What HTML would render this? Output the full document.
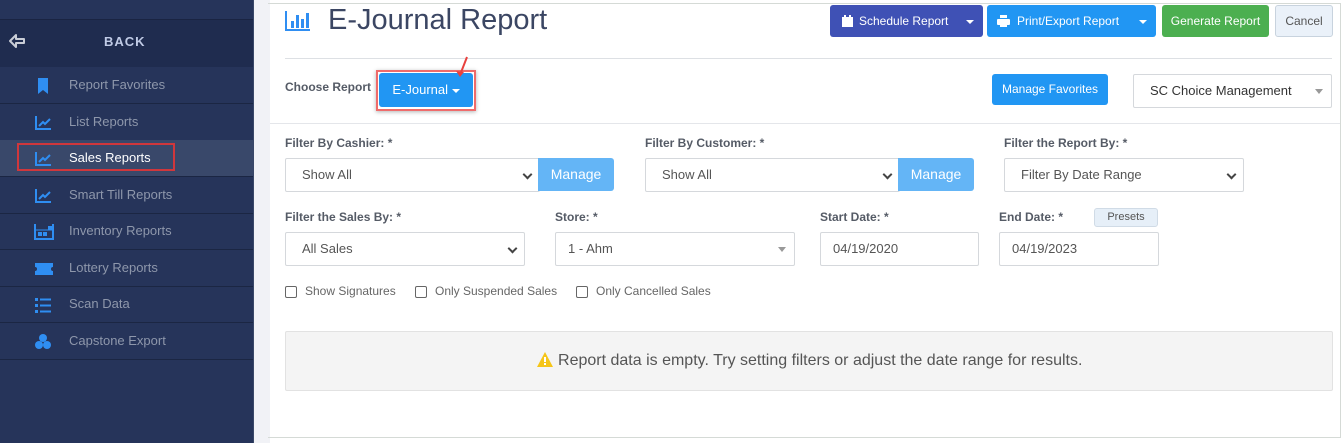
<!DOCTYPE html>
<html><head><meta charset="utf-8"><style>
*{box-sizing:border-box;margin:0;padding:0}
body{width:1344px;height:443px;overflow:hidden;background:#fff;font-family:"Liberation Sans",sans-serif;position:relative}
.abs{position:absolute}
#side{left:0;top:0;width:254px;height:443px;background:#26345a;border-right:1px solid #3a4868}
.row{position:absolute;left:0;width:253px;height:37px;border-bottom:1px solid #1b2643;color:#8e97ab;font-size:13px;line-height:36px;padding-left:69px}
.row svg{position:absolute;left:34px;top:10px}
.lbl{position:absolute;font-size:12px;font-weight:bold;color:#555b66}
.sel{position:absolute;height:34px;border:1px solid #d5d8dc;border-radius:2px;background:#fff;font-size:13px;color:#555;line-height:32px;padding-left:16px}
.chev{position:absolute;right:8px;top:12px;width:7px;height:7px;border-right:2px solid #444;border-bottom:2px solid #444;transform:rotate(45deg)}
.tri{position:absolute;right:8px;top:14px;border-left:4px solid transparent;border-right:4px solid transparent;border-top:5px solid #999}
.btn{position:absolute;height:32px;color:#fff;font-size:12px;line-height:32px;border-radius:3px;text-align:center}
.cb{position:absolute;top:286px;width:12px;height:12px;border:1px solid #666;border-radius:2px}
.ct{position:absolute;top:284px;font-size:12px;color:#666}
</style></head><body>
<div class="abs" style="left:254px;top:0;width:16px;height:443px;background:#f1f2f6"></div>
<div class="abs" style="left:268px;top:3px;width:1073px;height:435px;border:1px solid #d5dad6;border-left:none"></div>
<div id="side" class="abs">
<div class="abs" style="left:0;top:19px;width:253px;height:48px;background:#1f2c4f;border-top:1px solid #1a2442"></div>
<svg class="abs" style="left:8px;top:33px" width="18" height="16" viewBox="0 0 18 16"><path d="M8 2 L2 8 L8 14 V10 H16 V6 H8 Z" fill="none" stroke="#c9cdd6" stroke-width="2" stroke-linejoin="round"/></svg>
<div class="abs" style="left:104px;top:34px;font-size:13px;font-weight:bold;color:#c0cbe6;letter-spacing:1px">BACK</div>
<div class="row" style="top:67px"><svg width="18" height="18"><path d="M4 1H14V17L9 13L4 17Z" fill="#2f8ef2"/></svg>Report Favorites</div>
<div class="row" style="top:104px"><svg width="18" height="18"><path d="M2 2V15H17" stroke="#2f8ef2" stroke-width="2" fill="none"/><path d="M5 12L9 8L11 10L16 5" stroke="#2f8ef2" stroke-width="2" fill="none"/></svg>List Reports</div>
<div class="row" style="top:140px;background:#39486a;color:#fff"><svg width="18" height="18"><path d="M2 2V15H17" stroke="#2f8ef2" stroke-width="2" fill="none"/><path d="M5 12L9 8L11 10L16 5" stroke="#2f8ef2" stroke-width="2" fill="none"/></svg>Sales Reports</div>
<div class="abs" style="left:17px;top:143px;width:158px;height:28px;border:2px solid #d0373c"></div>
<div class="row" style="top:177px"><svg width="18" height="18"><path d="M2 2V15H17" stroke="#2f8ef2" stroke-width="2" fill="none"/><path d="M5 12L9 8L11 10L16 5" stroke="#2f8ef2" stroke-width="2" fill="none"/></svg>Smart Till Reports</div>
<div class="row" style="top:213px"><svg width="20" height="18"><path d="M1 1V17M19 1V17M1 16H19" stroke="#2f8ef2" stroke-width="2"/><rect x="4" y="9" width="4" height="4" fill="#2f8ef2"/><rect x="9" y="9" width="4" height="4" fill="#2f8ef2"/><rect x="14" y="3" width="4" height="4" fill="#2f8ef2"/><path d="M1 7H19" stroke="#2f8ef2" stroke-width="1"/></svg>Inventory Reports</div>
<div class="row" style="top:250px"><svg width="20" height="18"><path d="M1 3H19V7A2 2 0 0 0 19 11V15H1V11A2 2 0 0 0 1 7Z" fill="#2f8ef2"/></svg>Lottery Reports</div>
<div class="row" style="top:286px"><svg width="18" height="18"><g fill="#2f8ef2"><rect x="1" y="2" width="3" height="3"/><rect x="1" y="8" width="3" height="3"/><rect x="1" y="14" width="3" height="3"/><rect x="6" y="2.5" width="11" height="2"/><rect x="6" y="8.5" width="11" height="2"/><rect x="6" y="14.5" width="11" height="2"/></g></svg>Scan Data</div>
<div class="row" style="top:323px"><svg width="18" height="18"><g fill="#2f8ef2"><circle cx="9" cy="5" r="4"/><circle cx="5" cy="12" r="4"/><circle cx="13" cy="12" r="4"/></g></svg>Capstone Export</div>
</div>
<!-- header -->
<svg class="abs" style="left:285px;top:10px" width="26" height="22"><path d="M1 1V20H25" stroke="#2f8ef2" stroke-width="2" fill="none"/><g fill="#2f8ef2"><rect x="6" y="11" width="3" height="7"/><rect x="11" y="5" width="3" height="13"/><rect x="16" y="9" width="3" height="9"/><rect x="21" y="3" width="3" height="15"/></g></svg>
<div class="abs" style="left:328px;top:4px;font-size:29px;color:#3b4663">E-Journal Report</div>
<div class="btn" style="left:830px;top:5px;width:153px;background:#3f51b5"><svg class="abs" style="left:12px;top:10px" width="11" height="12"><rect x="0" y="2" width="11" height="10" fill="#fff"/><rect x="2" y="0" width="2" height="3" fill="#fff"/><rect x="7" y="0" width="2" height="3" fill="#fff"/></svg><span style="position:absolute;left:29px">Schedule Report</span><span class="abs" style="left:136px;top:15px;border-left:4px solid transparent;border-right:4px solid transparent;border-top:4px solid #fff"></span></div>
<div class="btn" style="left:987px;top:5px;width:169px;background:#2196f3"><svg class="abs" style="left:10px;top:10px" width="13" height="12"><rect x="3" y="0" width="7" height="3" fill="#fff"/><rect x="0" y="4" width="13" height="6" rx="1" fill="#fff"/><rect x="3" y="8" width="7" height="4" fill="#fff"/></svg><span style="position:absolute;left:30px">Print/Export Report</span><span class="abs" style="left:152px;top:15px;border-left:4px solid transparent;border-right:4px solid transparent;border-top:4px solid #fff"></span></div>
<div class="btn" style="left:1162px;top:5px;width:107px;background:#4caf50">Generate Report</div>
<div class="btn" style="left:1275px;top:5px;width:58px;background:#eaf1f9;border:1px solid #c8d3de;color:#555;line-height:30px">Cancel</div>
<div class="abs" style="left:285px;top:58px;width:1047px;height:1px;background:#dde0e4"></div>
<div class="abs" style="left:285px;top:80px;font-size:12px;font-weight:bold;color:#555b66">Choose Report</div>
<div class="abs" style="left:376px;top:70px;width:100px;height:41px;border:2px solid #ef6b6b;box-shadow:0 1px 4px rgba(0,0,0,.3)"></div>
<div class="btn" style="left:379px;top:73px;width:94px;height:34px;background:#2196f3;font-size:13px;line-height:34px">E-Journal <span style="display:inline-block;border-left:4px solid transparent;border-right:4px solid transparent;border-top:4px solid #fff;vertical-align:middle"></span></div>
<svg class="abs" style="left:455px;top:55px" width="20" height="25"><path d="M12 2L5 20" stroke="#e8413e" stroke-width="2"/><path d="M1 16L5 22L9 17Z" fill="#e8413e"/></svg>
<div class="btn" style="left:992px;top:74px;width:116px;height:31px;background:#2196f3;line-height:31px">Manage Favorites</div>
<div class="sel" style="left:1133px;top:74px;width:199px;color:#333">SC Choice Management<span class="tri"></span></div>
<div class="abs" style="left:270px;top:123px;width:1070px;height:1px;background:#e4e6ea"></div>
<!-- filters -->
<div class="lbl" style="left:285px;top:136px">Filter By Cashier: *</div>
<div class="sel" style="left:285px;top:158px;width:255px">Show All<span class="chev"></span></div>
<div class="btn" style="left:538px;top:158px;width:76px;height:33px;background:#64b5f6;font-size:14px;line-height:33px;border-radius:0 3px 3px 0">Manage</div>
<div class="lbl" style="left:645px;top:136px">Filter By Customer: *</div>
<div class="sel" style="left:645px;top:158px;width:255px">Show All<span class="chev"></span></div>
<div class="btn" style="left:898px;top:158px;width:76px;height:33px;background:#64b5f6;font-size:14px;line-height:33px;border-radius:0 3px 3px 0">Manage</div>
<div class="lbl" style="left:1004px;top:136px">Filter the Report By: *</div>
<div class="sel" style="left:1004px;top:158px;width:240px">Filter By Date Range<span class="chev"></span></div>
<div class="lbl" style="left:285px;top:210px">Filter the Sales By: *</div>
<div class="sel" style="left:285px;top:232px;width:240px">All Sales<span class="chev"></span></div>
<div class="lbl" style="left:555px;top:210px">Store: *</div>
<div class="sel" style="left:555px;top:232px;width:240px;padding-left:12px">1 - Ahm<span class="tri"></span></div>
<div class="lbl" style="left:820px;top:210px">Start Date: *</div>
<div class="sel" style="left:820px;top:232px;width:159px;padding-left:12px">04/19/2020</div>
<div class="lbl" style="left:999px;top:210px">End Date: *</div>
<div class="abs" style="left:1094px;top:208px;width:64px;height:19px;background:#e6eff8;border:1px solid #d0dbe6;border-radius:3px;font-size:11px;color:#555;text-align:center;line-height:17px">Presets</div>
<div class="sel" style="left:999px;top:232px;width:160px;padding-left:12px">04/19/2023</div>
<div class="cb" style="left:285px"></div><div class="ct" style="left:305px">Show Signatures</div>
<div class="cb" style="left:415px"></div><div class="ct" style="left:435px">Only Suspended Sales</div>
<div class="cb" style="left:576px"></div><div class="ct" style="left:596px">Only Cancelled Sales</div>
<div class="abs" style="left:285px;top:331px;width:1048px;height:60px;background:#f4f4f4;border:1px solid #e2e2e2;border-radius:2px;text-align:center;line-height:58px;font-size:16px;color:#555">
<svg style="vertical-align:-3px" width="18" height="17"><path d="M9 1L17 16H1Z" fill="#f5c518"/><rect x="8" y="6" width="2" height="5" fill="#fff"/><rect x="8" y="12" width="2" height="2" fill="#fff"/></svg> Report data is empty. Try setting filters or adjust the date range for results.</div>
</body></html>
